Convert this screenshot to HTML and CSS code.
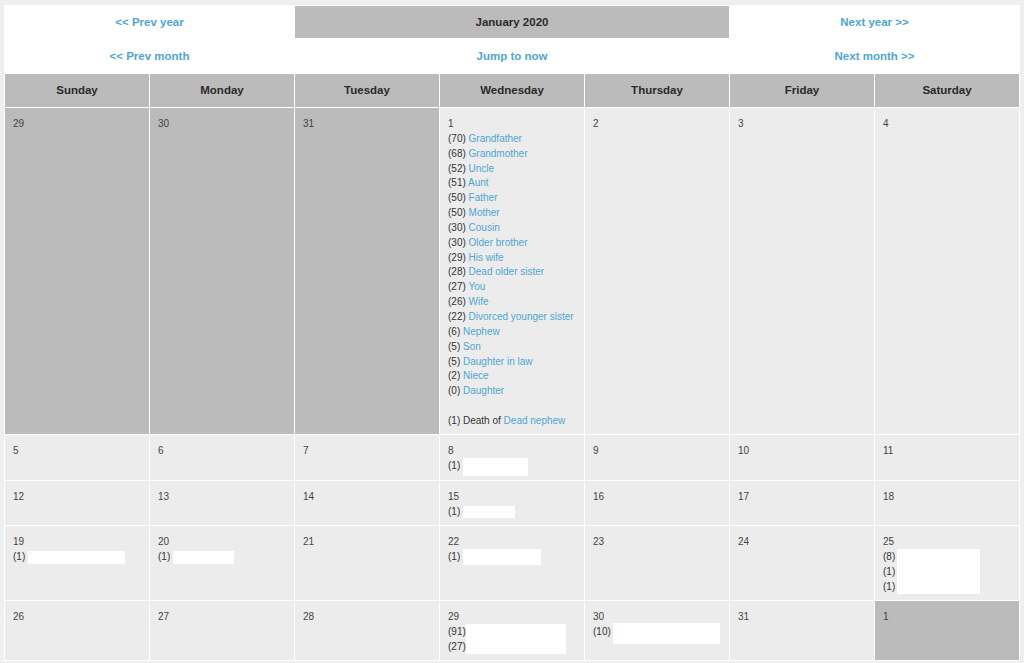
FILE: index.html
```html
<!DOCTYPE html>
<html lang="en">
<head>
<meta charset="utf-8">
<title>January 2020</title>
<link rel="stylesheet" href="styles.css">
</head>
<body>
<table class="cal">
  <colgroup>
    <col><col><col><col><col><col><col>
  </colgroup>
  <tr class="nav-row nav-row-1">
    <td colspan="2" class="nav"><a href="#">&lt;&lt; Prev year</a></td>
    <td colspan="3" class="title">January 2020</td>
    <td colspan="2" class="nav"><a href="#">Next year &gt;&gt;</a></td>
  </tr>
  <tr class="nav-row nav-row-2">
    <td colspan="2" class="nav"><a href="#">&lt;&lt; Prev month</a></td>
    <td colspan="3" class="nav"><a href="#">Jump to now</a></td>
    <td colspan="2" class="nav"><a href="#">Next month &gt;&gt;</a></td>
  </tr>
  <tr class="days">
    <th>Sunday</th><th>Monday</th><th>Tuesday</th><th>Wednesday</th><th>Thursday</th><th>Friday</th><th>Saturday</th>
  </tr>
  <tr class="week">
    <td class="day out"><div class="num">29</div></td>
    <td class="day out"><div class="num">30</div></td>
    <td class="day out"><div class="num">31</div></td>
    <td class="day">
      <div class="num">1</div>
      <div class="ev">(70) <a href="#">Grandfather</a></div>
      <div class="ev">(68) <a href="#">Grandmother</a></div>
      <div class="ev">(52) <a href="#">Uncle</a></div>
      <div class="ev">(51) <a href="#">Aunt</a></div>
      <div class="ev">(50) <a href="#">Father</a></div>
      <div class="ev">(50) <a href="#">Mother</a></div>
      <div class="ev">(30) <a href="#">Cousin</a></div>
      <div class="ev">(30) <a href="#">Older brother</a></div>
      <div class="ev">(29) <a href="#">His wife</a></div>
      <div class="ev">(28) <a href="#">Dead older sister</a></div>
      <div class="ev">(27) <a href="#">You</a></div>
      <div class="ev">(26) <a href="#">Wife</a></div>
      <div class="ev">(22) <a href="#">Divorced younger sister</a></div>
      <div class="ev">(6) <a href="#">Nephew</a></div>
      <div class="ev">(5) <a href="#">Son</a></div>
      <div class="ev">(5) <a href="#">Daughter in law</a></div>
      <div class="ev">(2) <a href="#">Niece</a></div>
      <div class="ev">(0) <a href="#">Daughter</a></div>
      <div class="ev blank">&nbsp;</div>
      <div class="ev">(1) Death of <a href="#">Dead nephew</a></div>
    </td>
    <td class="day"><div class="num">2</div></td>
    <td class="day"><div class="num">3</div></td>
    <td class="day"><div class="num">4</div></td>
  </tr>
  <tr class="week">
    <td class="day"><div class="num">5</div></td>
    <td class="day"><div class="num">6</div></td>
    <td class="day"><div class="num">7</div></td>
    <td class="day"><div class="num">8</div><div class="ev">(1) <span class="redact r8"></span></div></td>
    <td class="day"><div class="num">9</div></td>
    <td class="day"><div class="num">10</div></td>
    <td class="day"><div class="num">11</div></td>
  </tr>
  <tr class="week">
    <td class="day"><div class="num">12</div></td>
    <td class="day"><div class="num">13</div></td>
    <td class="day"><div class="num">14</div></td>
    <td class="day"><div class="num">15</div><div class="ev">(1) <span class="redact r15"></span></div></td>
    <td class="day"><div class="num">16</div></td>
    <td class="day"><div class="num">17</div></td>
    <td class="day"><div class="num">18</div></td>
  </tr>
  <tr class="week">
    <td class="day"><div class="num">19</div><div class="ev">(1) <span class="redact r19"></span></div></td>
    <td class="day"><div class="num">20</div><div class="ev">(1) <span class="redact r20"></span></div></td>
    <td class="day"><div class="num">21</div></td>
    <td class="day"><div class="num">22</div><div class="ev">(1) <span class="redact r22"></span></div></td>
    <td class="day"><div class="num">23</div></td>
    <td class="day"><div class="num">24</div></td>
    <td class="day">
      <div class="num">25</div>
      <div class="group">
        <div class="counts"><div>(8)</div><div>(1)</div><div>(1)</div></div>
        <span class="block r25"></span>
      </div>
    </td>
  </tr>
  <tr class="week">
    <td class="day"><div class="num">26</div></td>
    <td class="day"><div class="num">27</div></td>
    <td class="day"><div class="num">28</div></td>
    <td class="day">
      <div class="num">29</div>
      <div class="group">
        <div class="counts"><div>(91)</div><div>(27)</div></div>
        <span class="block r29"></span>
      </div>
    </td>
    <td class="day">
      <div class="num">30</div>
      <div class="group">
        <div class="counts"><div>(10)</div></div>
        <span class="block r30"></span>
      </div>
    </td>
    <td class="day"><div class="num">31</div></td>
    <td class="day out"><div class="num">1</div></td>
  </tr>
</table>
</body>
</html>
```

FILE: styles.css
```css
html, body {
  margin: 0;
  padding: 0;
}

body {
  background: #efefef;
  font-family: "Liberation Sans", Arial, Helvetica, sans-serif;
  color: #333;
}

a {
  color: #4ea6cf;
  text-decoration: none;
}

.cal {
  margin: 5px 4px 0 4px;
  width: 1016px;
  table-layout: fixed;
  border-collapse: collapse;
  background: #fff;
}

.cal td,
.cal th {
  border: 1px solid #fff;
  padding: 0;
}

.nav-row td {
  text-align: center;
  vertical-align: middle;
  font-size: 11.5px;
  font-weight: bold;
  background: #fff;
}

.nav-row-1 td {
  height: 32px;
}

.nav-row-2 td {
  height: 34px;
}

.nav-row td.title {
  background: #bbbbbb;
  color: #2a2a2a;
}

.cal .days th {
  height: 32px;
  padding-bottom: 1px;
  background: #bbbbbb;
  color: #2a2a2a;
  font-size: 11.5px;
  font-weight: bold;
  text-align: center;
  vertical-align: middle;
}

.day {
  background: #ececec;
  vertical-align: top;
  font-size: 10px;
  line-height: 14.85px;
}

.cal td.day {
  padding: 9px 8px 5.7px 8px;
}

.day.out {
  background: #bbbbbb;
}

.num {
  color: #444;
}

.ev {
  color: #333;
  white-space: nowrap;
}

.redact {
  display: inline-block;
  background: #fff;
  vertical-align: middle;
  margin: -3px 0;
}

.r8 { width: 65px; height: 18px; }
.r15 { width: 52px; height: 12px; }
.r19 { width: 97px; height: 13px; }
.r20 { width: 61px; height: 13px; }
.r22 { width: 78px; height: 16px; }

.group {
  display: flex;
  align-items: flex-start;
}

.counts {
  color: #333;
}

.block {
  display: block;
  background: #fff;
}

.r25 { width: 83px; height: 45px; margin-left: 2px; margin-top: -1px; }
.r29 { width: 100px; height: 30px; margin-left: 0; margin-top: -1px; }
.r30 { width: 107px; height: 21px; margin-left: 2px; margin-top: -2px; }
```
